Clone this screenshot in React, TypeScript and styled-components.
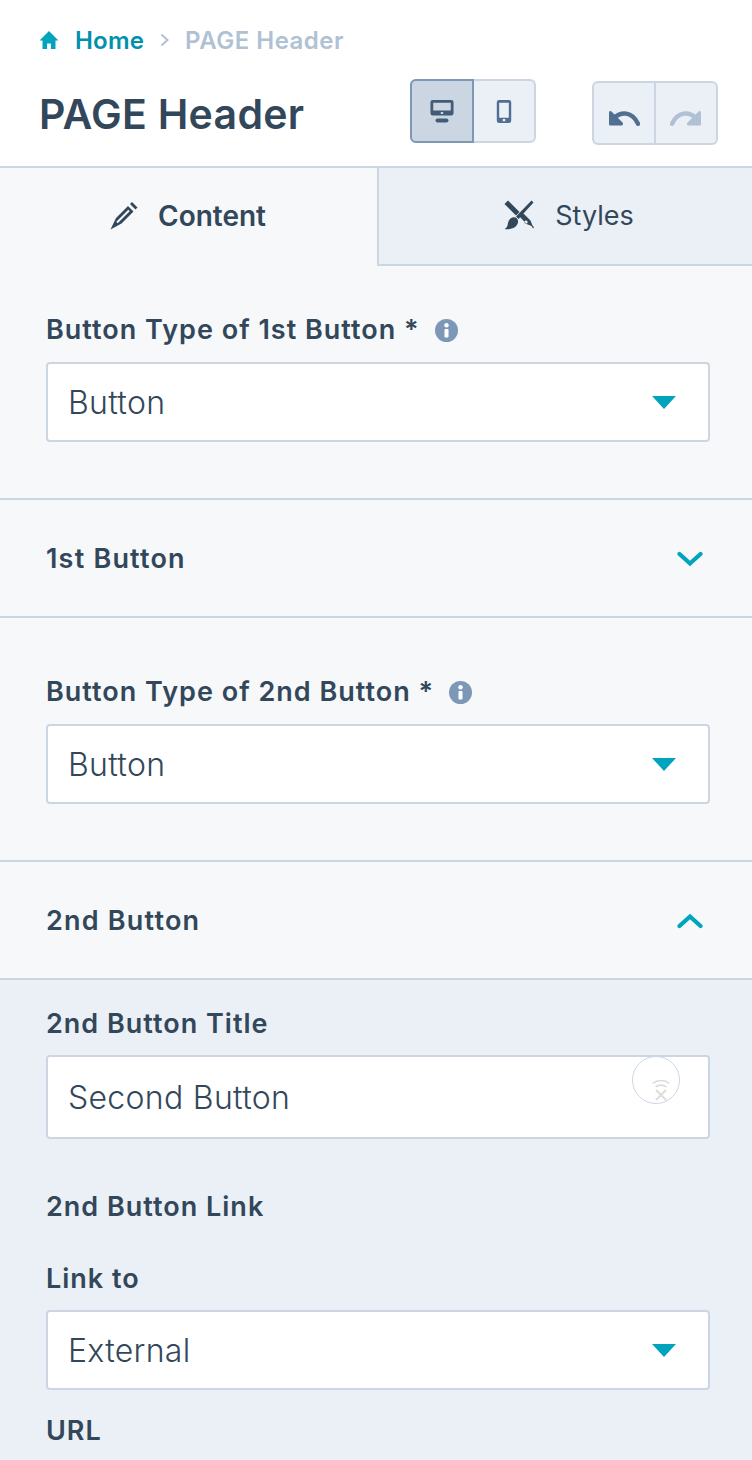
import React from 'react'
import styled, { createGlobalStyle } from 'styled-components'

const GlobalStyle = createGlobalStyle`
  html, body {
    margin: 0;
    padding: 0;
    background: #eaf0f6;
  }
  * {
    box-sizing: border-box;
  }
`;

const Page = styled.div`
  width: 752px;
  height: 1460px;
  overflow: hidden;
  font-family: 'Inter', 'Liberation Sans', sans-serif;
  color: #33475b;
  background: #f6f8fa;
`;

const Header = styled.header`
  height: 168px;
  padding: 26px 34px 0 39px;
  background: #fff;
  border-bottom: 2px solid #cbd6e2;
`;

const Breadcrumbs = styled.nav`
  display: flex;
  align-items: center;
  height: 28px;
  font-size: 24px;
  font-weight: 600;
`;

const HomeLink = styled.span`
  color: #0091ae;
  margin-left: 16px;
  letter-spacing: 0.2px;
`;

const CrumbSep = styled.svg`
  margin: 0 15px 0 16px;
`;

const CrumbCurrent = styled.span`
  color: #b0c1d4;
  letter-spacing: 0.5px;
`;

const TitleRow = styled.div`
  display: flex;
  align-items: flex-start;
  margin-top: 25px;
`;

const Title = styled.h1`
  flex: 1;
  margin: 0;
  margin-top: 12px;
  font-size: 41px;
  line-height: 46px;
  font-weight: 600;
  letter-spacing: 0.3px;
`;

const ButtonGroup = styled.div<{ $offset: number; $width: number }>`
  display: flex;
  width: ${p => p.$width}px;
  height: 64px;
  margin-top: ${p => p.$offset}px;
  margin-left: ${p => (p.$offset ? 56 : 0)}px;
  border: 2px solid #cbd6e2;
  border-radius: 6px;
  background: #eaf0f6;
`;

const GroupButton = styled.div<{ $active?: boolean; $divider?: boolean }>`
  flex: ${p => (p.$active ? '0 0 64px' : '1')};
  display: flex;
  align-items: center;
  justify-content: center;
  margin: ${p => (p.$active ? '-2px 0 -2px -2px' : '0')};
  background: ${p => (p.$active ? '#cbd6e2' : 'transparent')};
  border: ${p => (p.$active ? '2px solid #7c98b6' : 'none')};
  border-radius: ${p => (p.$active ? '6px 0 0 6px' : '0')};
  border-left: ${p => (p.$divider ? '2px solid #cbd6e2' : undefined)};
`;

const Tabs = styled.div`
  display: flex;
  height: 98px;
`;

const Tab = styled.div<{ $active?: boolean }>`
  display: flex;
  align-items: center;
  justify-content: center;
  gap: ${p => (p.$active ? '20px' : '21px')};
  width: ${p => (p.$active ? '377px' : '375px')};
  padding: ${p => (p.$active ? '0 1px 2px 0' : '0 0 2px 7px')};
  font-size: ${p => (p.$active ? '28px' : '27px')};
  font-weight: ${p => (p.$active ? 600 : 400)};
  background: ${p => (p.$active ? '#f6f8fa' : '#eaf0f6')};
  border-left: ${p => (p.$active ? 'none' : '2px solid #cbd6e2')};
  border-bottom: ${p => (p.$active ? 'none' : '2px solid #cbd6e2')};
`;

const FieldSection = styled.section<{ $height: number; $top: number }>`
  height: ${p => p.$height}px;
  padding: ${p => p.$top}px 42px 0 46px;
  border-bottom: 2px solid #cbd6e2;
`;

const Label = styled.div<{ $gap?: number }>`
  display: flex;
  align-items: center;
  gap: 15px;
  height: 32px;
  margin-bottom: ${p => p.$gap ?? 16}px;
  font-size: 27px;
  line-height: 32px;
  font-weight: 600;
  letter-spacing: 1px;
  white-space: nowrap;
`;

const Select = styled.div`
  display: flex;
  align-items: center;
  justify-content: space-between;
  height: 80px;
  padding: 1px 32px 0 20px;
  font-size: 32px;
  font-weight: 300;
  letter-spacing: 0.3px;
  background: #fff;
  border: 2px solid #cbd6e2;
  border-radius: 4px;
`;

const AccordionRow = styled.div`
  display: flex;
  align-items: center;
  justify-content: space-between;
  height: 118px;
  padding: 1px 49px 0 46px;
  font-size: 27px;
  font-weight: 600;
  letter-spacing: 1.2px;
  border-bottom: 2px solid #cbd6e2;
`;

const OpenPanel = styled.div`
  height: 480px;
  padding: 28px 42px 0 46px;
  background: #eaf0f6;
`;

const InputWrap = styled.div`
  position: relative;
  margin-bottom: 52px;
`;

const TextInput = styled.div`
  display: flex;
  align-items: center;
  height: 84px;
  padding: 1px 20px 0;
  font-size: 32px;
  font-weight: 300;
  letter-spacing: 0.3px;
  background: #fff;
  border: 2px solid #cbd6e2;
  border-radius: 4px;
`;

const FloatingBadge = styled.div`
  position: absolute;
  top: 1px;
  left: 586px;
  width: 48px;
  height: 48px;
  border: 1.5px solid #cfd6e3;
  border-radius: 50%;
  background: #fff;
`;

const SelectTight = styled(Select)`
  margin-bottom: 25px;
`;

const HomeIcon = () => (
  <svg width="20" height="20" viewBox="0 0 20 20">
    <path fill="#00a4bd" d="M10 1 0.5 10.4h3V19h4.6v-5.600h3.800V19h4.600v-8.600h3z" />
  </svg>
)

const DesktopIcon = () => (
  <svg width="24" height="24" viewBox="0 0 26 26">
    <path fill="#425b76" fillRule="evenodd" d="M3 1h20a2.500 2.500 0 0 1 2.500 2.500v12a2.500 2.500 0 0 1-2.500 2.500H3a2.500 2.500 0 0 1-2.500-2.500v-12A2.500 2.500 0 0 1 3 1zm0.500 3v8.500h19V4zM11.700 14.200v2h2.600v-2z" />
    <rect x="6" y="21" width="14" height="4.500" rx="2.200" fill="#425b76" />
  </svg>
)

const MobileIcon = () => (
  <svg width="16" height="25" viewBox="0 0 16 26">
    <path fill="#516f90" fillRule="evenodd" d="M3 1h10a2.500 2.500 0 0 1 2.500 2.500v19a2.500 2.500 0 0 1-2.500 2.500H3a2.500 2.500 0 0 1-2.500-2.500v-19A2.500 2.500 0 0 1 3 1zm0 3v15.500h10V4zM6.700 20.800v2.400h2.600v-2.400z" />
  </svg>
)

const UndoArrow = styled.svg<{ $flip?: boolean }>`
  margin-top: 10px;
  transform: ${p => (p.$flip ? 'scaleX(-1)' : 'none')};
`;

const HistoryIcon = ({ color, flip }: { color: string; flip?: boolean }) => (
  <UndoArrow $flip={flip} width="32" height="16" viewBox="0 0 32 16">
    <path d="M6 8C13 1.500 24 1 30 13.800" fill="none" stroke={color} strokeWidth="4.400" strokeLinecap="round" />
    <path fill={color} d="M1 2.500C1 1 2.500 .5 3.500 1.500L14.500 12.500c1 1 .5 3-1 3H2.500C1.500 15.500 1 15 1 14z" />
  </UndoArrow>
)

const PencilIcon = () => (
  <svg width="28" height="28" viewBox="0 0 28 28">
    <path fill="#33475b" d="M6 16 18 4l5.500 5.500L11.500 21.500 0.500 27.500zM20 2l2-2 5.500 5.500-2 2z" />
    <path fill="#f6f8fa" d="M6.300 19.800 18.300 7.800l1.400 1.400-12 12z" />
  </svg>
)

const BrushIcon = () => (
  <svg width="30" height="30" viewBox="0 0 30 30">
    <path fill="#33475b" d="M0.500 4 4 .5l11.500 11.500-3.500 3.500z" />
    <path fill="#33475b" fillRule="evenodd" d="M17.500 14.500l-2 2 7 7.500 5 2 1.500 2.500 1-1-1.500-2-2-5-7-7zM22 20.500a1.600 1.600 0 1 0 .01 0z" />
    <path fill="#33475b" d="M27.500 .5l2 2L14.500 19l-2.500-2.500z" />
    <path fill="#33475b" d="M8.500 17.500c3.500-1 6 1.500 5.500 5-.8 4.500-6.500 7.500-13.500 6.500 3-1.500 3-3.500 3.500-6 .5-2.500 2-5 4.500-5.500z" />
  </svg>
)

const InfoIcon = () => (
  <svg width="23" height="23" viewBox="0 0 23 23">
    <circle cx="11.500" cy="11.500" r="11.500" fill="#7c98b6" />
    <rect x="9.500" y="10" width="4" height="8.500" rx="1" fill="#fff" />
    <circle cx="11.500" cy="6.300" r="2.200" fill="#fff" />
  </svg>
)

const CaretIcon = () => (
  <svg width="24" height="13" viewBox="0 0 24 13">
    <path fill="#00a4bd" d="M0 0h24L12 13z" />
  </svg>
)

const Chevron = ({ up }: { up?: boolean }) => (
  <svg width="26" height="16" viewBox="0 0 26 16">
    <path
      d={up ? 'M2.500 13 13 3.500 23.500 13' : 'M2.500 3 13 12.500 23.500 3'}
      fill="none"
      stroke="#00a4bd"
      strokeWidth="4.200"
      strokeLinecap="round"
    />
  </svg>
)

const OfflineIcon = () => (
  <svg width="48" height="48" viewBox="0 0 48 48">
    <g fill="none" stroke="#dcdcdc" strokeWidth="1.600">
      <path d="M19.500 26.500c5-4 12-4 17 0" />
      <path d="M22.500 30c3-2.500 8-2.500 11 0" />
      <path d="M23 33 33 43M33 33 23 43" strokeWidth="2" />
    </g>
  </svg>
)

const App = () => {
  return (
    <>
      <GlobalStyle />
      <Page>
        <Header>
          <Breadcrumbs>
            <HomeIcon />
            <HomeLink>Home</HomeLink>
            <CrumbSep width="10" height="14" viewBox="0 0 10 14">
              <path d="M1.500 1.500 7.500 7l-6 5.500" fill="none" stroke="#b0c1d4" strokeWidth="2" />
            </CrumbSep>
            <CrumbCurrent>PAGE Header</CrumbCurrent>
          </Breadcrumbs>
          <TitleRow>
            <Title>PAGE Header</Title>
            <ButtonGroup $offset={0} $width={126}>
              <GroupButton $active><DesktopIcon /></GroupButton>
              <GroupButton><MobileIcon /></GroupButton>
            </ButtonGroup>
            <ButtonGroup $offset={2} $width={126}>
              <GroupButton><HistoryIcon color="#516f90" /></GroupButton>
              <GroupButton $divider><HistoryIcon color="#b0c1d4" flip /></GroupButton>
            </ButtonGroup>
          </TitleRow>
        </Header>

        <Tabs>
          <Tab $active><PencilIcon />Content</Tab>
          <Tab><BrushIcon />Styles</Tab>
        </Tabs>

        <FieldSection $height={234} $top={48}>
          <Label>Button Type of 1st Button * <InfoIcon /></Label>
          <Select>Button<CaretIcon /></Select>
        </FieldSection>

        <AccordionRow>1st Button<Chevron /></AccordionRow>

        <FieldSection $height={244} $top={58}>
          <Label>Button Type of 2nd Button * <InfoIcon /></Label>
          <Select>Button<CaretIcon /></Select>
        </FieldSection>

        <AccordionRow>2nd Button<Chevron up /></AccordionRow>

        <OpenPanel>
          <Label $gap={15}>2nd Button Title</Label>
          <InputWrap>
            <TextInput>Second Button</TextInput>
            <FloatingBadge><OfflineIcon /></FloatingBadge>
          </InputWrap>
          <Label $gap={40}>2nd Button Link</Label>
          <Label $gap={15}>Link to</Label>
          <SelectTight>External<CaretIcon /></SelectTight>
          <Label $gap={0}>URL</Label>
        </OpenPanel>
      </Page>
    </>
  )
}

export default App
